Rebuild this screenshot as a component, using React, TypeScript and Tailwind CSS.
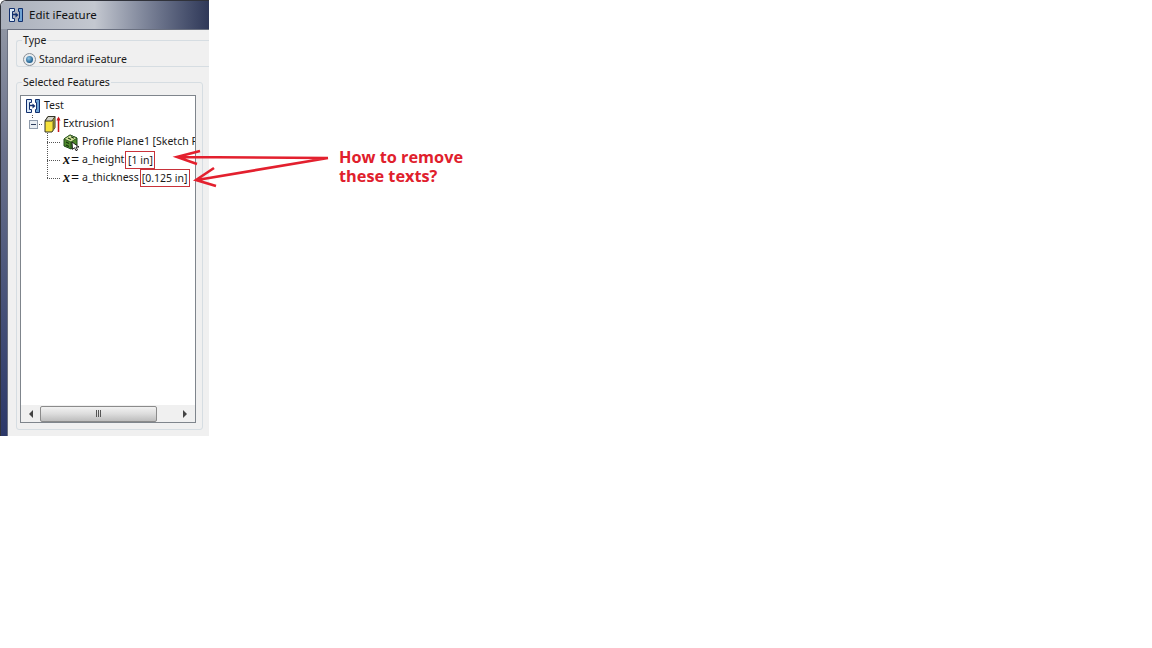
const uiFont = { fontFamily: '"Noto Sans", "Liberation Sans", sans-serif' };

function FeatureIcon() {
  return (
    <svg width="16" height="16" viewBox="0 0 16 16" className="flex-none">
      <path d="M1.5 1.5h5v3h-2v7h2v3h-5z" fill="#dbe9f7" stroke="#12306e" />
      <path d="M14.5 1.5h-4v3h1v7h-1v3h4z" fill="#6fa3d4" stroke="#12306e" />
      <path d="M5 7.5h3" stroke="#12306e" strokeWidth="1.5" />
      <path d="M7.5 5.5l3 2.5-3 2.5z" fill="#12306e" />
    </svg>
  );
}

function ExtrusionIcon() {
  return (
    <svg width="17" height="18" viewBox="0 0 17 18" className="flex-none">
      <path d="M1 6l3-4.500h7v11l-3 4.500H1z" fill="#f6e23c" stroke="#333326" strokeWidth="1" />
      <path d="M1 6h7l3-4.500H4z" fill="#d3d3c8" stroke="#333326" strokeWidth="1" />
      <path d="M8.500 6.500v10l2-3V3z" fill="#77722e" />
      <path d="M14.500 17V3" stroke="#c8141c" strokeWidth="1.500" />
      <path d="M12.500 5.500l2-4 2 4z" fill="#c8141c" />
    </svg>
  );
}

function ProfileIcon() {
  return (
    <svg width="17" height="17" viewBox="0 0 17 17" className="flex-none">
      <path d="M1 5l6-4 7 3v7l-6 4-7-3z" fill="#4f8a2c" stroke="#1e4a18" strokeWidth="1" />
      <path d="M1 5l7 3 6-4-7-3z" fill="#d3e39a" stroke="#1e4a18" strokeWidth="0.800" />
      <path d="M8 8v7" stroke="#1e4a18" strokeWidth="1" />
      <path d="M3 8l3 1.500M3 11l3 1.500M5 4l3 1.500M8 2.800l3 1.500" stroke="#17350f" strokeWidth="1.100" />
      <path d="M9 8l7 5h-3l1.500 3-1.500.7-1.500-3-2 1.700z" fill="#ffffff" stroke="#111111" strokeWidth="0.900" />
    </svg>
  );
}

function Connector({ up, through }: { up?: boolean; through?: boolean }) {
  return (
    <svg width="40" height="18" className="flex-none">
      <path
        d={through ? "M26.500 0V18M26 9.500H40" : up ? "M26.500 0V9M26 9.500H40" : ""}
        stroke="#555555"
        strokeDasharray="1 1"
        fill="none"
      />
    </svg>
  );
}

function Expander() {
  return (
    <svg width="21" height="18" className="flex-none">
      <path d="M11.500 0V4" stroke="#555555" strokeDasharray="1 1" />
      <path d="M16 9.500H21" stroke="#555555" strokeDasharray="1 1" />
      <rect x="8.500" y="5.500" width="8" height="8" fill="#e8edf2" stroke="#8f9bab" />
      <path d="M10 9.500h5" stroke="#2c3c5c" />
    </svg>
  );
}

function Param({ name, value, width, last }: { name: string; value: string; width: string; last?: boolean }) {
  return (
    <div className="flex h-[18px] items-center whitespace-nowrap">
      <Connector up={last} through={!last} />
      <span className="w-[21px] flex-none pl-[2px] text-[14px] leading-none font-bold tracking-[1px] text-[#111] italic" style={{ fontFamily: '"Liberation Serif", serif' }}>
        x=
      </span>
      <span>{name}</span>
      <span className={`ml-[1px] flex h-[18px] flex-none items-center justify-center border border-[#c8323a] leading-none ${width}`}>{value}</span>
    </div>
  );
}

function Scrollbar() {
  return (
    <div className="flex h-[17px] items-center bg-[#f0f0f0]">
      <div className="flex w-[19px] flex-none justify-center">
        <div className="h-0 w-0 border-y-[4px] border-r-[4px] border-y-transparent border-r-[#444]" />
      </div>
      <div className="flex h-[16px] w-[117px] flex-none items-center justify-center gap-[1px] rounded-[2px] border border-[#8b8b8b] bg-gradient-to-b from-[#f2f2f2] via-[#dcdcdc] to-[#bdbdbd]">
        <div className="h-[7px] w-[1px] bg-[#555]" />
        <div className="h-[7px] w-[1px] bg-[#555]" />
        <div className="h-[7px] w-[1px] bg-[#555]" />
      </div>
      <div className="flex-1" />
      <div className="flex w-[20px] flex-none justify-center">
        <div className="h-0 w-0 border-y-[4px] border-l-[4px] border-y-transparent border-l-[#444]" />
      </div>
    </div>
  );
}

export default function App() {
  return (
    <div className="relative h-[648px] w-[1152px] overflow-hidden bg-white text-[10.5px] text-[#1a1a1a]" style={uiFont}>
      <div className="flex h-[436px] w-[209px] flex-col overflow-hidden rounded-tl-[6px] border-t border-l border-[#30323a]">
        <div className="flex h-[28px] flex-none items-center gap-[5px] bg-gradient-to-r from-[#aab0bc] via-[#c4c8d0] via-45% to-[#2f3858] pl-[7px]">
          <FeatureIcon />
          <span className="text-[11.5px] text-[#111]">Edit iFeature</span>
        </div>
        <div className="flex min-h-0 flex-1">
          <div className="w-[6px] flex-none bg-gradient-to-b from-[#8f95a3] via-[#69708a] via-30% to-[#2b3768]" />
          <div className="flex min-w-0 flex-1 flex-col border-t border-l border-[#6a7080] bg-[#f0f0f0] pt-[3px] pl-[8px]">
            <fieldset className="h-[34px] min-w-0 flex-none rounded-l-[3px] border border-r-0 border-[#d6dde2] pl-[6px]">
              <legend className="ml-[-1px] px-[1px] leading-[14px]">Type</legend>
              <div className="mt-[3px] flex h-[19px] items-center gap-[3px]">
                <span className="flex h-[13px] w-[13px] items-center justify-center rounded-full border border-[#8a8f96] bg-[#e9edf0]">
                  <span className="h-[7px] w-[7px] rounded-full bg-[radial-gradient(circle_at_40%_35%,#8fc4e4,#1f5f8f_70%)]" />
                </span>
                <span>Standard iFeature</span>
              </div>
            </fieldset>
            <fieldset className="mt-[8px] mr-[6px] h-[355px] min-w-0 flex-none rounded-[3px] border border-[#d6dde2] pr-[6px] pl-[3px]">
              <legend className="ml-[2px] px-[1px] leading-[14px]">Selected Features</legend>
              <div className="mt-[6px] flex h-[328px] flex-col border border-[#7f858c] bg-white">
                <div className="min-h-0 flex-1 overflow-hidden pt-[1px]">
                  <div className="flex h-[18px] items-center gap-[3px] pl-[4px]">
                    <FeatureIcon />
                    <span>Test</span>
                  </div>
                  <div className="flex h-[18px] items-center gap-[2px] whitespace-nowrap">
                    <Expander />
                    <ExtrusionIcon />
                    <span>Extrusion1</span>
                  </div>
                  <div className="flex h-[18px] items-center gap-[2px] whitespace-nowrap">
                    <Connector through />
                    <ProfileIcon />
                    <span>Profile Plane1 [Sketch Plane]</span>
                  </div>
                  <Param name="a_height" value="[1 in]" width="w-[30px]" />
                  <Param name="a_thickness" value="[0.125 in]" width="w-[50px]" last />
                </div>
                <Scrollbar />
              </div>
            </fieldset>
          </div>
        </div>
      </div>

      <svg width="340" height="60" viewBox="170 140 340 60" className="absolute top-[140px] left-[170px]">
        <path d="M328 158L178 157M200 151L177 157L197 164M328 158L197 180M214 168L196 180L216 186" fill="none" stroke="#e3202e" strokeWidth="2.600" />
      </svg>
      <div className="absolute top-[148px] left-[339px] text-[16.300px] font-bold text-[#e0202c]" style={{ fontFamily: '"Open Sans", sans-serif' }}>
        <div className="h-[19px] leading-[19px]">How to remove</div>
        <div className="h-[19px] leading-[19px]">these texts?</div>
      </div>
    </div>
  );
}
